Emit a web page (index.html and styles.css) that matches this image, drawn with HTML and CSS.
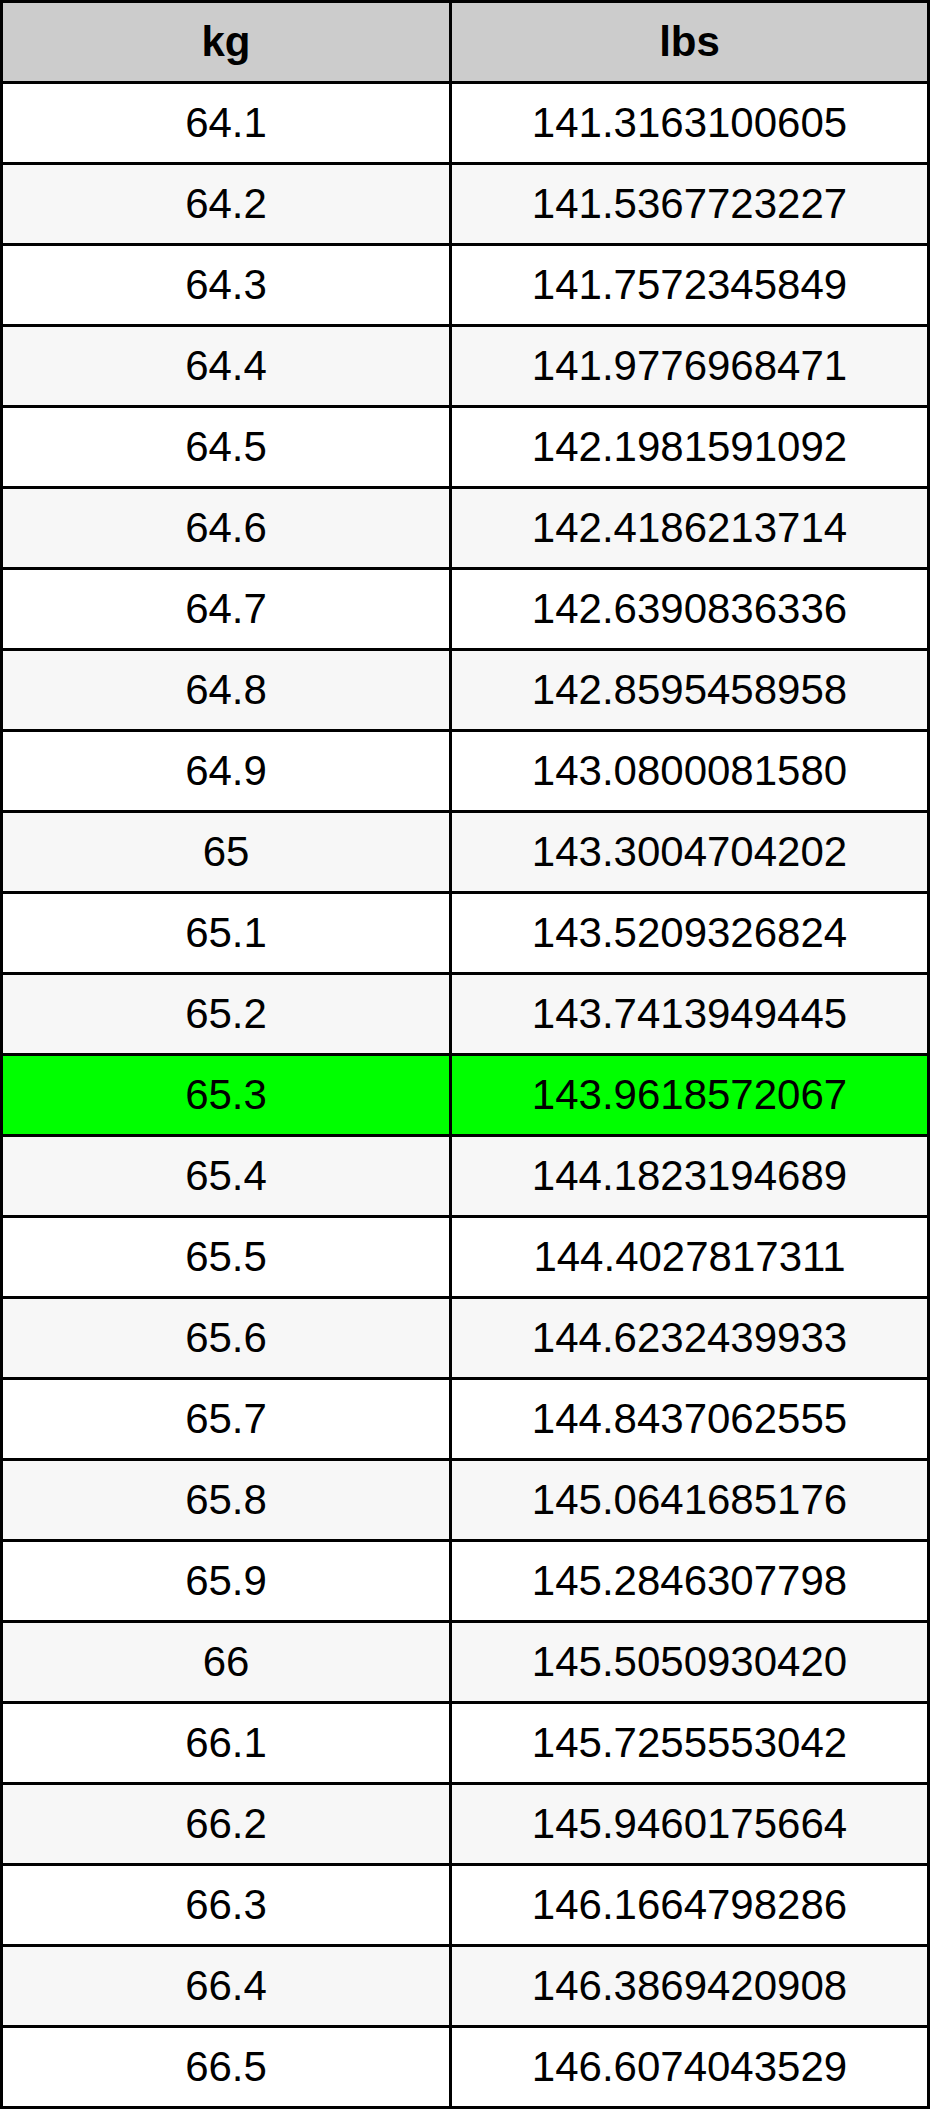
FILE: index.html
```html
<!DOCTYPE html>
<html lang="en">
<head>
<meta charset="utf-8">
<title>kg to lbs</title>
<link rel="stylesheet" href="styles.css">
</head>
<body>
<table class="conv">
<colgroup><col class="c1"><col class="c2"></colgroup>
<thead>
<tr><th>kg</th><th>lbs</th></tr>
</thead>
<tbody>
<tr><td>64.1</td><td>141.3163100605</td></tr>
<tr class="alt"><td>64.2</td><td>141.5367723227</td></tr>
<tr><td>64.3</td><td>141.7572345849</td></tr>
<tr class="alt"><td>64.4</td><td>141.9776968471</td></tr>
<tr><td>64.5</td><td>142.1981591092</td></tr>
<tr class="alt"><td>64.6</td><td>142.4186213714</td></tr>
<tr><td>64.7</td><td>142.6390836336</td></tr>
<tr class="alt"><td>64.8</td><td>142.8595458958</td></tr>
<tr><td>64.9</td><td>143.0800081580</td></tr>
<tr class="alt"><td>65</td><td>143.3004704202</td></tr>
<tr><td>65.1</td><td>143.5209326824</td></tr>
<tr class="alt"><td>65.2</td><td>143.7413949445</td></tr>
<tr class="hl"><td>65.3</td><td>143.9618572067</td></tr>
<tr class="alt"><td>65.4</td><td>144.1823194689</td></tr>
<tr><td>65.5</td><td>144.4027817311</td></tr>
<tr class="alt"><td>65.6</td><td>144.6232439933</td></tr>
<tr><td>65.7</td><td>144.8437062555</td></tr>
<tr class="alt"><td>65.8</td><td>145.0641685176</td></tr>
<tr><td>65.9</td><td>145.2846307798</td></tr>
<tr class="alt"><td>66</td><td>145.5050930420</td></tr>
<tr><td>66.1</td><td>145.7255553042</td></tr>
<tr class="alt"><td>66.2</td><td>145.9460175664</td></tr>
<tr><td>66.3</td><td>146.1664798286</td></tr>
<tr class="alt"><td>66.4</td><td>146.3869420908</td></tr>
<tr><td>66.5</td><td>146.6074043529</td></tr>
</tbody>
</table>
</body>
</html>
```

FILE: styles.css
```css
html, body {
  margin: 0;
  padding: 0;
  background: #ffffff;
}

.conv {
  width: 930px;
  table-layout: fixed;
  border-collapse: separate;
  border-spacing: 0;
  border-top: 3px solid #000;
  border-left: 3px solid #000;
  font-family: "Liberation Sans", Arial, Helvetica, sans-serif;
  font-size: 42px;
  color: #000;
}

.conv .c1 { width: 449px; }
.conv .c2 { width: 478px; }

.conv tr { height: 81px; }

.conv th,
.conv td {
  padding: 0;
  border-right: 3px solid #000;
  border-bottom: 3px solid #000;
  text-align: center;
  vertical-align: middle;
  line-height: normal;
  background: #ffffff;
}

.conv th {
  font-weight: bold;
  background: #cccccc;
}

.conv tr.alt td { background: #f7f7f7; }
.conv tr.hl td { background: #00ff00; }
```
